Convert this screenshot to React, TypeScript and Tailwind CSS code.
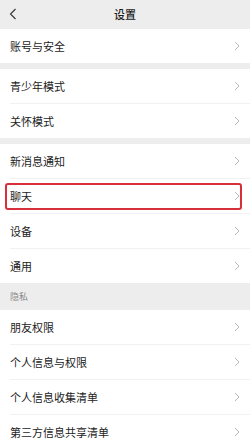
import React from 'react';

const Chevron: React.FC = () => (
    <svg width="6" height="10" viewBox="0 0 6 10" className="shrink-0">
        <path d="M1 1 L5 5 L1 9" fill="none" stroke="#b8b8b8" strokeWidth="1" />
    </svg>
);

type RowProps = { label: string; divider?: boolean; highlight?: boolean };

const Row: React.FC<RowProps> = ({ label, divider, highlight }) => (
    <div className="relative bg-white">
        <div className="h-[34px] flex items-center justify-between pl-[10px] pr-[10px]">
            <span className="text-[11px] text-[#1c1c1c]">{label}</span>
            <Chevron />
        </div>
        {divider && <div className="ml-[10px] h-px bg-[#f1f1f1]" />}
        {highlight && (
            <div className="absolute left-[5px] right-[8px] top-[4px] bottom-[4px] border-2 border-[#d7303a] rounded-[3px]" />
        )}
    </div>
);

const Gap: React.FC = () => <div className="h-[6px] bg-[#ededed]" />;

const App: React.FC = () => {
    return (
        <div
            className="w-[250px] h-[444px] overflow-hidden bg-[#ededed]"
            style={{ fontFamily: '"Noto Sans CJK SC", "Noto Sans", sans-serif' }}
        >
            <header className="h-[29px] relative flex items-center justify-center">
                <svg width="8" height="12" viewBox="0 0 8 12" className="absolute left-[9px] top-[8px]">
                    <path d="M6.5 1 L1.5 6 L6.5 11" fill="none" stroke="#333" strokeWidth="1.1" />
                </svg>
                <h1 className="text-[11px] font-medium text-[#1c1c1c]">设置</h1>
            </header>

            <Row label="账号与安全" />
            <Gap />
            <Row label="青少年模式" divider />
            <Row label="关怀模式" />
            <Gap />
            <Row label="新消息通知" divider />
            <Row label="聊天" divider highlight />
            <Row label="设备" divider />
            <Row label="通用" />

            <div className="h-[27px] flex items-center pl-[10px]">
                <span className="text-[9px] text-[#8a8a8a]">隐私</span>
            </div>

            <Row label="朋友权限" divider />
            <Row label="个人信息与权限" divider />
            <Row label="个人信息收集清单" divider />
            <Row label="第三方信息共享清单" />
        </div>
    );
};

export default App;
